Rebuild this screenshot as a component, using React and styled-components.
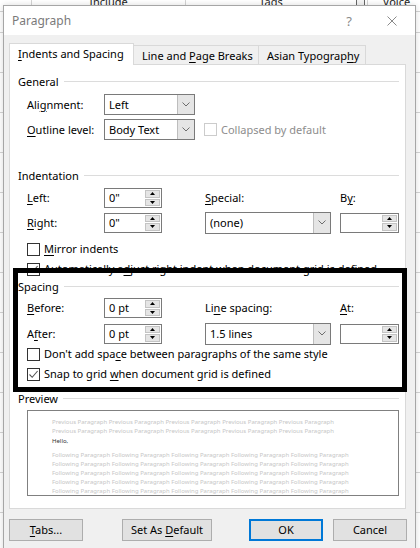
import React from 'react';
import styled, { createGlobalStyle } from 'styled-components';

const GlobalStyle = createGlobalStyle`
  html, body {
    margin: 0;
    padding: 0;
  }
  body {
    width: 420px;
    height: 548px;
    overflow: hidden;
    background: #ffffff;
    font-family: "Noto Sans", "Open Sans", sans-serif;
    font-size: 11px;
    color: #000000;
  }
`;

/* ---------- spreadsheet behind the dialog ---------- */

const Page = styled.div`
  position: relative;
  width: 420px;
  height: 548px;
  overflow: hidden;
  background-color: #ffffff;
  background-image: repeating-linear-gradient(
    to bottom,
    transparent 0,
    transparent 32px,
    #d4d4d4 32px,
    #d4d4d4 33px,
    transparent 33px,
    transparent 40px
  );
`;

const SheetHeader = styled.div`
  display: flex;
  height: 20px;
  margin-top: -9px;
  background: #ffffff;
  border-bottom: 1px solid #d4d4d4;
`;

const SheetCell = styled.div`
  display: flex;
  align-items: center;
  flex: 0 0 ${({ w }) => w}px;
  border-right: 1px solid #d4d4d4;
  box-sizing: border-box;
  font-size: 11px;
  color: #222;
`;

const SheetText = styled.span`
  flex: 1;
  text-align: center;
`;

const FilterBox = styled.span`
  width: 9px;
  height: 14px;
  margin-right: 2px;
  border: 1px solid #666;
  box-sizing: border-box;
  background: #f4f4f4;
`;

/* ---------- dialog frame ---------- */

const Dialog = styled.div`
  position: absolute;
  left: 3px;
  top: 5px;
  width: 413px;
  height: 560px;
  box-sizing: border-box;
  border: 1px solid #a6a6a6;
  background: #f0f0f0;
  display: flex;
  flex-direction: column;
  box-shadow: 0 0 6px rgba(0, 0, 0, 0.15);
`;

const TitleBar = styled.div`
  display: flex;
  align-items: center;
  height: 29px;
  padding-left: 8px;
  background: #ffffff;
  color: #7a7a7a;
  font-size: 12px;
`;

const Title = styled.span`
  flex: 1;
  padding-bottom: 1px;
`;

const TitleButton = styled.span`
  display: flex;
  align-items: center;
  justify-content: center;
  width: ${({ w }) => w}px;
  height: 29px;
  color: #8a8a8a;
  font-size: 13px;
`;

const Body = styled.div`
  padding: 7px 8px 0 5px;
`;

const Tabs = styled.div`
  display: flex;
  align-items: flex-end;
  height: 22px;
  position: relative;
  z-index: 1;
`;

const Tab = styled.div`
  box-sizing: border-box;
  width: ${({ w }) => w}px;
  height: ${({ active }) => (active ? 22 : 19)}px;
  margin-left: ${({ first }) => (first ? 0 : -1)}px;
  margin-bottom: ${({ active }) => (active ? -1 : 0)}px;
  padding-left: 8px;
  display: flex;
  align-items: center;
  border: 1px solid #d9d9d9;
  border-bottom: none;
  background: ${({ active }) => (active ? '#ffffff' : '#f0f0f0')};
  position: relative;
  z-index: ${({ active }) => (active ? 2 : 1)};
  white-space: nowrap;
  padding-bottom: ${({ active }) => (active ? 3 : 0)}px;
`;

const Panel = styled.div`
  box-sizing: border-box;
  width: 397px;
  height: 445px;
  border: 1px solid #d9d9d9;
  background: #ffffff;
  padding: 8px 6px 0 8px;
  display: flex;
  flex-direction: column;
`;

const Key = styled.span`
  text-decoration: underline;
  text-underline-offset: 2px;
`;

/* ---------- section parts ---------- */

const Heading = styled.div`
  display: flex;
  align-items: center;
  gap: 5px;
  height: 16px;
  margin-top: ${({ mt }) => mt}px;
  white-space: nowrap;
`;

const Rule = styled.span`
  flex: 1;
  height: 1px;
  background: #dcdcdc;
  margin-top: 1px;
`;

const Row = styled.div`
  display: flex;
  align-items: center;
  height: ${({ h }) => h || 21}px;
  margin-top: ${({ mt }) => mt}px;
  margin-left: 9px;
`;

const Label = styled.span`
  flex: 0 0 ${({ w }) => w || 77}px;
  white-space: nowrap;
  padding-bottom: 1px;
`;

const FieldGrid = styled.div`
  display: grid;
  grid-template-columns: 77px 101px 135px 59px;
  grid-template-rows: 20px 21px;
  row-gap: ${({ gap }) => gap}px;
  align-items: center;
  margin-top: ${({ mt }) => mt}px;
  margin-left: 9px;
  white-space: nowrap;
`;

const SelectBox = styled.div`
  box-sizing: border-box;
  width: ${({ w }) => w}px;
  height: ${({ h }) => h || 21}px;
  border: 1px solid #7a7a7a;
  background: #ffffff;
  display: flex;
  align-items: stretch;
`;

const SelectValue = styled.span`
  flex: 1;
  display: flex;
  align-items: center;
  padding-left: 4px;
  padding-bottom: 1px;
`;

const SelectArrow = styled.span`
  width: 16px;
  background: #e5e5e5;
  border-left: 1px solid #bdbdbd;
  display: flex;
  align-items: center;
  justify-content: center;
`;

const SpinBox = styled.div`
  box-sizing: border-box;
  width: ${({ w }) => w || 58}px;
  height: 20px;
  border: 1px solid #7a7a7a;
  background: #ffffff;
  display: flex;
  padding: 1px;
`;

const SpinValue = styled.span`
  flex: 1;
  display: flex;
  align-items: center;
  padding-left: 3px;
  padding-bottom: 1px;
`;

const SpinButtons = styled.span`
  width: 15px;
  display: flex;
  flex-direction: column;
  gap: 1px;
`;

const SpinButton = styled.span`
  flex: 1;
  background: #e5e5e5;
  border: 1px solid #c4c4c4;
  display: flex;
  align-items: center;
  justify-content: center;
`;

const Check = styled.span`
  box-sizing: border-box;
  flex: 0 0 13px;
  width: 13px;
  height: 13px;
  border: 1px solid ${({ disabled }) => (disabled ? '#cccccc' : '#333333')};
  background: #ffffff;
  margin-right: 4px;
  display: flex;
  align-items: center;
  justify-content: center;
`;

const CheckText = styled.span`
  white-space: nowrap;
  color: ${({ disabled }) => (disabled ? '#8d8d8d' : '#000000')};
  padding-bottom: 1px;
`;

/* ---------- preview ---------- */

const PreviewBox = styled.div`
  box-sizing: border-box;
  height: 86px;
  margin: 4px 0 0 9px;
  width: 372px;
  border: 1px solid #808080;
  padding: 7px 0 0 24px;
  overflow: hidden;
  font-size: 6px;
  line-height: 9px;
  white-space: nowrap;
`;

const PreviewLine = styled.div`
  color: ${({ dark }) => (dark ? '#333333' : '#c6c6c6')};
  margin-top: ${({ mt }) => mt || 0}px;
`;

/* ---------- buttons ---------- */

const ButtonRow = styled.div`
  display: flex;
  margin-top: 10px;
`;

const Button = styled.div`
  box-sizing: border-box;
  width: ${({ w }) => w}px;
  height: 22px;
  margin-left: ${({ ml }) => ml}px;
  border: ${({ primary }) => (primary ? '2px solid #0078d7' : '1px solid #adadad')};
  background: #e1e1e1;
  display: flex;
  align-items: center;
  justify-content: center;
  padding-bottom: 1px;
`;

/* ---------- annotation ---------- */

const Highlight = styled.div`
  position: absolute;
  left: 13px;
  top: 268px;
  width: 394px;
  height: 124px;
  box-sizing: border-box;
  border: 5px solid #000000;
  pointer-events: none;
`;

/* ---------- small drawings ---------- */

const Chevron = () => (
  <svg width="8" height="5" viewBox="0 0 8 5">
    <path d="M0.5 0.5 L4 4 L7.5 0.5" fill="none" stroke="#6d6d6d" strokeWidth="1" />
  </svg>
);

const Tri = ({ down }) => (
  <svg width="5" height="3" viewBox="0 0 5 3">
    <path d={down ? 'M0 0 H5 L2.5 3 Z' : 'M0 3 H5 L2.5 0 Z'} fill="#000" />
  </svg>
);

const Tick = () => (
  <svg width="11" height="11" viewBox="0 0 11 11">
    <path d="M1.5 5.5 L4.2 8.3 L9.6 2" fill="none" stroke="#555" strokeWidth="1.1" />
  </svg>
);

const CloseIcon = () => (
  <svg width="10" height="10" viewBox="0 0 10 10">
    <path d="M0.5 0.5 L9.5 9.5 M9.5 0.5 L0.5 9.5" stroke="#8a8a8a" strokeWidth="1" />
  </svg>
);

function Select({ w, h, value }) {
  return (
    <SelectBox w={w} h={h}>
      <SelectValue>{value}</SelectValue>
      <SelectArrow>
        <Chevron />
      </SelectArrow>
    </SelectBox>
  );
}

function Spin({ w, value }) {
  return (
    <SpinBox w={w}>
      <SpinValue>{value}</SpinValue>
      <SpinButtons>
        <SpinButton>
          <Tri />
        </SpinButton>
        <SpinButton>
          <Tri down />
        </SpinButton>
      </SpinButtons>
    </SpinBox>
  );
}

function CheckRow({ mt, checked, disabled, children }) {
  return (
    <Row h={16} mt={mt}>
      <Check disabled={disabled}>{checked && <Tick />}</Check>
      <CheckText disabled={disabled}>{children}</CheckText>
    </Row>
  );
}

const prev = 'Previous Paragraph Previous Paragraph Previous Paragraph Previous Paragraph Previous Paragraph';
const follow =
  'Following Paragraph Following Paragraph Following Paragraph Following Paragraph Following Paragraph';

export default function App() {
  return (
    <Page>
      <GlobalStyle />
      <SheetHeader>
        <SheetCell w={32} />
        <SheetCell w={154}>
          <SheetText>Include</SheetText>
        </SheetCell>
        <SheetCell w={182}>
          <SheetText>Tags</SheetText>
          <FilterBox />
        </SheetCell>
        <SheetCell w={58}>
          <SheetText>Voice</SheetText>
        </SheetCell>
      </SheetHeader>

      <Dialog>
        <TitleBar>
          <Title>Paragraph</Title>
          <TitleButton w={40}>?</TitleButton>
          <TitleButton w={46}>
            <CloseIcon />
          </TitleButton>
        </TitleBar>

        <Body>
          <Tabs>
            <Tab active first w={125}>
              <span>
                <Key>I</Key>ndents and Spacing
              </span>
            </Tab>
            <Tab w={126}>
              <span>
                Line and <Key>P</Key>age Breaks
              </span>
            </Tab>
            <Tab w={108}>
              <span>
                Asian Typograp<Key>h</Key>y
              </span>
            </Tab>
          </Tabs>

          <Panel>
            <Heading mt={0}>
              General
              <Rule />
            </Heading>
            <Row mt={5}>
              <Label>
                Ali<Key>g</Key>nment:
              </Label>
              <Select w={91} value="Left" />
            </Row>
            <Row mt={4}>
              <Label>
                <Key>O</Key>utline level:
              </Label>
              <Select w={91} value="Body Text" />
              <Row h={16} mt={0}>
                <Check disabled />
                <CheckText disabled>Collapsed by default</CheckText>
              </Row>
            </Row>

            <Heading mt={27}>
              Indentation
              <Rule />
            </Heading>
            <FieldGrid mt={5} gap={4}>
              <Label>
                <Key>L</Key>eft:
              </Label>
              <Spin value={'0"'} />
              <Label>
                <Key>S</Key>pecial:
              </Label>
              <Label>
                B<Key>y</Key>:
              </Label>
              <Label>
                <Key>R</Key>ight:
              </Label>
              <Spin value={'0"'} />
              <Select w={126} h={22} value="(none)" />
              <Spin w={59} value="" />
            </FieldGrid>
            <CheckRow mt={8}>
              <Key>M</Key>irror indents
            </CheckRow>
            <CheckRow mt={4} checked>
              Automatically a<Key>d</Key>just right indent when document grid is defined
            </CheckRow>

            <Heading mt={1}>
              Spacing
              <Rule />
            </Heading>
            <FieldGrid mt={4} gap={5}>
              <Label>
                <Key>B</Key>efore:
              </Label>
              <Spin value="0 pt" />
              <Label>
                Li<Key>n</Key>e spacing:
              </Label>
              <Label>
                <Key>A</Key>t:
              </Label>
              <Label>
                A<Key>f</Key>ter:
              </Label>
              <Spin value="0 pt" />
              <Select w={126} h={22} value="1.5 lines" />
              <Spin w={59} value="" />
            </FieldGrid>
            <CheckRow mt={2}>
              Don't add spa<Key>c</Key>e between paragraphs of the same style
            </CheckRow>
            <CheckRow mt={4} checked>
              Snap to grid <Key>w</Key>hen document grid is defined
            </CheckRow>

            <Heading mt={8}>
              Preview
              <Rule />
            </Heading>
            <PreviewBox>
              <PreviewLine>{prev}</PreviewLine>
              <PreviewLine>{prev}</PreviewLine>
              <PreviewLine dark mt={1}>
                Hello,
              </PreviewLine>
              <PreviewLine mt={5}>{follow}</PreviewLine>
              <PreviewLine>{follow}</PreviewLine>
              <PreviewLine>{follow}</PreviewLine>
              <PreviewLine>{follow}</PreviewLine>
              <PreviewLine>{follow}</PreviewLine>
            </PreviewBox>
          </Panel>

          <ButtonRow>
            <Button w={74} ml={0}>
              <span>
                <Key>T</Key>abs...
              </span>
            </Button>
            <Button w={90} ml={39}>
              <span>
                Set As <Key>D</Key>efault
              </span>
            </Button>
            <Button w={74} ml={37} primary>
              OK
            </Button>
            <Button w={74} ml={10}>
              Cancel
            </Button>
          </ButtonRow>
        </Body>
      </Dialog>

      <Highlight />
    </Page>
  );
}
